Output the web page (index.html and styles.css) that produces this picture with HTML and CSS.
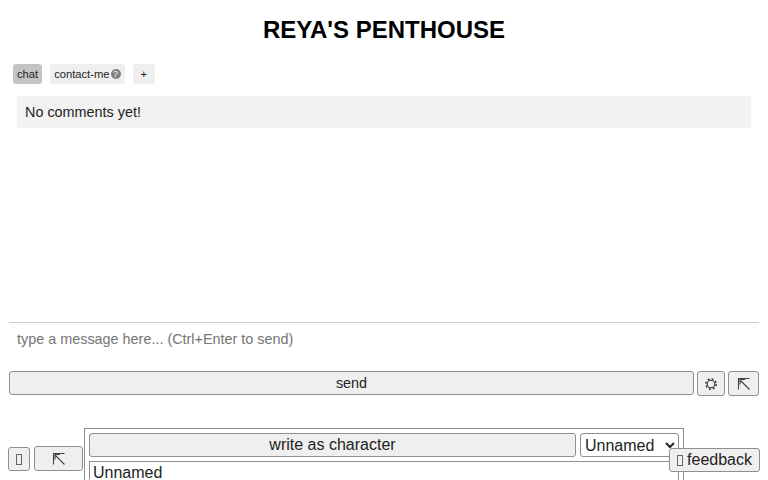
FILE: index.html
```html
<!DOCTYPE html>
<html lang="en">
<head>
<meta charset="utf-8">
<title>Reya's Penthouse</title>
<link rel="stylesheet" href="styles.css">
</head>
<body>
<h1 class="title">REYA'S PENTHOUSE</h1>
<nav class="tabs">
  <span class="tab tab-active">chat</span>
  <span class="tab">contact-me<span class="help">?</span></span>
  <span class="tab tab-add">+</span>
</nav>
<section class="comments">No comments yet!</section>
<section class="composer">
  <textarea class="message" placeholder="type a message here... (Ctrl+Enter to send)"></textarea>
  <div class="send-row">
    <button class="btn send">send</button>
    <button class="btn icon-btn gear-btn"><svg class="gear-icon" viewBox="0 0 14 14"><circle class="gear-teeth" cx="7" cy="7" r="5.2"/><circle class="gear-ring" cx="7" cy="7" r="3.8"/></svg></button>
    <button class="btn icon-btn arrow-btn"><svg class="arrow-icon" viewBox="0 0 14 14"><path d="M1.5 12.5V1.5H12.5M2.5 2.5L12.5 12.5M3 2.5V7.5M3 2.5H8"/></svg></button>
  </div>
</section>
<section class="character-row">
  <button class="btn tofu-btn"><span class="tofu"></span></button>
  <button class="btn wide-arrow"><svg class="arrow-icon" viewBox="0 0 14 14"><path d="M1.5 12.5V1.5H12.5M2.5 2.5L12.5 12.5M3 2.5V7.5M3 2.5H8"/></svg></button>
  <div class="character-box">
    <div class="write-row">
      <button class="btn write">write as character</button>
      <select class="char-select"><option>Unnamed</option></select>
    </div>
    <input class="char-name" value="Unnamed">
  </div>
</section>
<button class="btn feedback"><span class="tofu"></span>feedback</button>
</body>
</html>
```
FILE: styles.css
```css
html, body { margin: 0; height: 480px; overflow: hidden; }
body { font-family: "Liberation Sans", Arial, sans-serif; background: #fff; color: #000; }
.title { margin: 0; padding-top: 16px; height: 28px; font-size: 24px; line-height: 28px; font-weight: 700; text-align: center; }
.tabs { display: flex; align-items: center; gap: 8px; margin-top: 20px; padding-left: 13px; }
.tab { display: flex; align-items: center; height: 20px; padding: 0 4px; border-radius: 3px; background: #efefef; font-size: 11.2px; color: #222; }
.tab-active { background: #c4c4c4; }
.tab-add { padding: 0 8px; }
.help { display: flex; align-items: center; justify-content: center; width: 10px; height: 10px; margin-left: 1px; border-radius: 50%; background: #808080; color: #fff; font-size: 9px; }
.comments { margin: 12px 17px 0; height: 32px; padding: 0 8px; background: #f2f2f2; font-size: 14.4px; line-height: 32px; color: #222; }
.composer { margin: 194px 9px 0; }
.message { display: block; width: 100%; box-sizing: border-box; height: 49px; padding: 8px; border: 0; border-top: 1px solid #ccc; outline: 0; resize: none; font: 14.4px/16px "Liberation Sans", Arial, sans-serif; }
.message::placeholder { color: #757575; }
.send-row { display: flex; gap: 3px; }
.btn { box-sizing: border-box; padding: 1px 6px; border: 1px solid #8f8f8f; border-radius: 3px; background: #efefef; color: #222; font-family: "Liberation Sans", Arial, sans-serif; }
.send { flex: 1; height: 24px; font-size: 14.4px; }
.icon-btn { width: 28px; height: 25px; }
.gear-btn { padding: 0; }
.gear-icon { display: block; width: 14px; height: 14px; margin: 0 auto; fill: none; stroke: #333; }
.gear-teeth { stroke-width: 1.4; stroke-dasharray: 2 2.08; }
.gear-ring { stroke-width: 1.1; }
.arrow-btn { width: 31px; padding: 0; }
.arrow-icon { display: block; width: 14px; height: 14px; margin: 0 auto; fill: none; stroke: #444; stroke-width: 1.1; }
.tofu { display: inline-block; box-sizing: border-box; width: 6px; height: 11px; border: 1px solid #666; vertical-align: -1px; }
.character-row { display: flex; align-items: flex-start; margin: 32px 0 0 8px; }
.tofu-btn { width: 22px; height: 24px; margin-top: 19px; padding: 0; font-size: 14.4px; }
.wide-arrow { width: 49px; height: 25px; margin: 18px 0 0 4px; padding: 0; }
.character-box { box-sizing: border-box; width: 600px; height: 80px; margin-left: 1px; padding: 4px; border: 1px solid #8f8f8f; }
.write-row { display: flex; gap: 4px; }
.write { flex: 1; height: 24px; font-size: 16px; }
.char-select { width: 99px; height: 24px; padding-left: 0; border: 1px solid #8f8f8f; border-radius: 3px; background: #fff; color: #222; font: 16px "Liberation Sans", Arial, sans-serif; }
.char-name { display: block; box-sizing: border-box; width: 590px; height: 24px; margin-top: 4px; padding: 1px 3px; border: 1px solid #8f8f8f; color: #222; font: 16px "Liberation Sans", Arial, sans-serif; }
.feedback { position: fixed; left: 669px; top: 448px; width: 91px; height: 24px; padding: 0; font-size: 16px; white-space: nowrap; }
.feedback .tofu { margin-right: 4px; }
```
